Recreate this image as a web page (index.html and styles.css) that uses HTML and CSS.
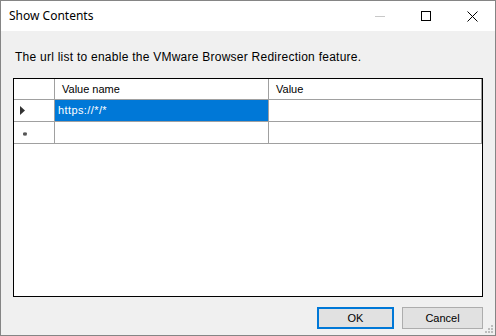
FILE: index.html
```html
<!DOCTYPE html>
<html lang="en">
<head>
    <meta charset="UTF-8">
    <meta name="viewport" content="width=device-width, initial-scale=1.0">
    <title>Show Contents</title>
    <link rel="stylesheet" href="styles.css">
</head>
<body>
    <div class="window">
        <div class="titlebar">
            <span class="title">Show Contents</span>
            <div class="caption-buttons">
                <span class="cap-btn">
                    <svg width="10" height="10" viewBox="0 0 10 10"><line x1="0" y1="5.5" x2="10" y2="5.5" stroke="#c8c8c8" stroke-width="1"/></svg>
                </span>
                <span class="cap-btn">
                    <svg width="10" height="10" viewBox="0 0 10 10"><rect x="0.5" y="0.5" width="9" height="9" fill="none" stroke="#000" stroke-width="1"/></svg>
                </span>
                <span class="cap-btn">
                    <svg width="11" height="11" viewBox="0 0 11 11"><path d="M0.5 0.5 L10.5 10.5 M10.5 0.5 L0.5 10.5" stroke="#000" stroke-width="1"/></svg>
                </span>
            </div>
        </div>

        <div class="content">
            <p class="label">The url list to enable the VMware Browser Redirection feature.</p>

            <div class="grid">
                <div class="cell row-head"></div>
                <div class="cell col-head">Value name</div>
                <div class="cell col-head">Value</div>

                <div class="cell row-head">
                    <svg width="5" height="9" viewBox="0 0 5 9"><path d="M0 0 L5 4.5 L0 9 Z" fill="#333"/></svg>
                </div>
                <div class="cell selected">https://*/*</div>
                <div class="cell"></div>

                <div class="cell row-head">
                    <svg class="new-row" width="4" height="4" viewBox="0 0 4 4"><path d="M2 0 V4 M0 1 L4 3 M4 1 L0 3" stroke="#555" stroke-width="1.2"/></svg>
                </div>
                <div class="cell"></div>
                <div class="cell"></div>
            </div>

            <div class="buttons">
                <button class="btn btn-default">OK</button>
                <button class="btn btn-cancel">Cancel</button>
            </div>
        </div>

        <svg class="grip" width="9" height="9" viewBox="0 0 9 9">
            <rect x="6" y="0" width="2" height="2" fill="#bdbdbd"/>
            <rect x="3" y="3" width="2" height="2" fill="#bdbdbd"/>
            <rect x="6" y="3" width="2" height="2" fill="#bdbdbd"/>
            <rect x="0" y="6" width="2" height="2" fill="#bdbdbd"/>
            <rect x="3" y="6" width="2" height="2" fill="#bdbdbd"/>
            <rect x="6" y="6" width="2" height="2" fill="#bdbdbd"/>
        </svg>
    </div>
</body>
</html>
```

FILE: styles.css
```css
body {
    margin: 0;
    font-family: "Liberation Sans", Arial, sans-serif;
    font-size: 11px;
    color: #000;
    background-color: #f0f0f0;
}

.window {
    position: relative;
    width: 496px;
    height: 336px;
    box-sizing: border-box;
    border: 1px solid #858585;
    background-color: #f0f0f0;
    display: flex;
    flex-direction: column;
}

/* Title bar */
.titlebar {
    height: 30px;
    background-color: white;
    display: flex;
    align-items: center;
    justify-content: space-between;
}

.title {
    font-family: "Noto Sans", sans-serif;
    font-size: 12px;
    padding-left: 8px;
    margin-top: -1px;
}

.caption-buttons {
    display: flex;
    height: 30px;
}

.cap-btn {
    width: 46px;
    height: 30px;
    display: flex;
    align-items: center;
    justify-content: center;
}

.cap-btn svg {
    display: block;
}

/* Dialog body */
.content {
    flex: 1;
    display: flex;
    flex-direction: column;
    padding: 0 12px;
}

.label {
    margin: 20px 0 0 2px;
    font-size: 12px;
    letter-spacing: 0.25px;
    line-height: 13px;
}

.grid {
    margin-top: 14px;
    width: 470px;
    height: 219px;
    box-sizing: border-box;
    border: 1px solid #000;
    background-color: white;
    display: grid;
    grid-template-columns: 41px 214px 213px;
    grid-template-rows: 21px 22px 22px;
    align-content: start;
}

.cell {
    box-sizing: border-box;
    border-right: 1px solid #a0a0a0;
    border-bottom: 1px solid #a0a0a0;
    padding-left: 3px;
    line-height: 21px;
    white-space: nowrap;
}

.col-head {
    padding-left: 7px;
    line-height: 20px;
}

.row-head {
    padding-left: 0;
    display: flex;
    align-items: center;
}

.row-head svg {
    display: block;
    margin-left: 6px;
}

.row-head .new-row {
    margin-left: 9px;
    margin-top: 2px;
}

.selected {
    background-color: #0078d7;
    color: white;
    letter-spacing: 0.4px;
}

/* Buttons */
.buttons {
    display: flex;
    justify-content: flex-end;
    gap: 8px;
    margin-top: 10px;
}

.btn {
    height: 22px;
    box-sizing: border-box;
    font-family: "Liberation Sans", Arial, sans-serif;
    font-size: 11px;
    color: #000;
    background-color: #e1e1e1;
    border: 1px solid #adadad;
    padding: 0;
}

.btn-default {
    width: 77px;
    border: 2px solid #0078d7;
}

.btn-cancel {
    width: 81px;
}

.grip {
    position: absolute;
    right: 1px;
    bottom: 1px;
}
```
